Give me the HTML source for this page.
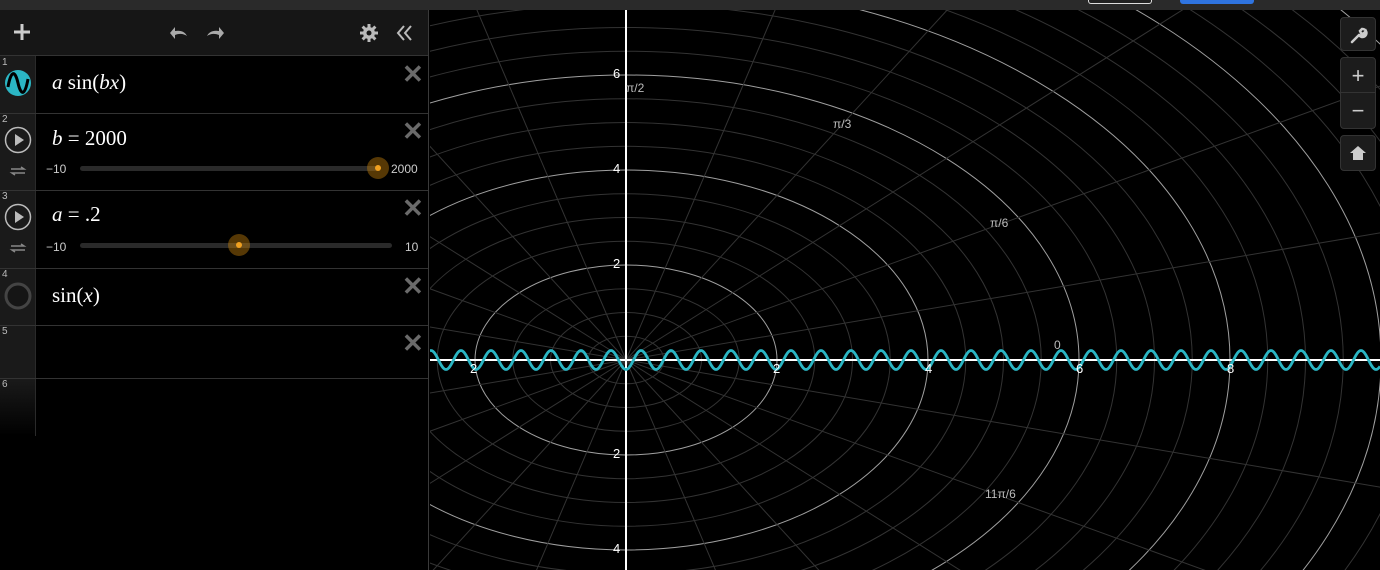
<!DOCTYPE html>
<html><head><meta charset="utf-8">
<style>
*{margin:0;padding:0;box-sizing:border-box}
html,body{width:1380px;height:570px;overflow:hidden}
body{background:#000;position:relative;font-family:"Liberation Sans",sans-serif}
.abs{position:absolute}
#top{left:0;top:0;width:1380px;height:10px;background:#2a2a2a}
#side{left:0;top:10px;width:429px;height:560px;background:#000;border-right:1px solid #3a3a3a}
#tool{left:0;top:10px;width:428px;height:46px;background:#161616;border-bottom:1px solid #333}
.gut{left:0;width:36px;background:#1a1a1a;border-right:1px solid #2a2a2a}
.row{left:0;width:428px;border-bottom:1px solid #333}
.num{font-size:10px;color:#bbb;left:2px}
.math{font-family:"Liberation Serif",serif;color:#fff;font-size:21px;left:52px}
.math i{font-style:italic}
.x{color:#6a6a6a;font-size:26px;left:402px;line-height:20px;font-weight:bold}
.lbl{color:#ccc;font-size:12px}
.track{height:5px;border-radius:3px;background:#2a2a2a}
.thumb{width:22px;height:22px;border-radius:50%;background:rgba(190,125,10,0.45)}
.thumb::after{content:"";position:absolute;left:8px;top:8px;width:6px;height:6px;border-radius:50%;background:#f0a020}
.btn{left:1340px;width:36px;background:#1c1c1c;border:1px solid #333;border-radius:4px;color:#ccc;text-align:center}
.gl{color:#fff;font-size:13px}
.tl{color:#bbb;font-size:12px}
</style></head><body>
<svg class="abs" style="left:0;top:0" width="1380" height="570" id="g"></svg>
<div class="abs" id="top"></div>
<div class="abs" style="left:1088px;top:0;width:64px;height:4px;border:1px solid #ddd;border-top:none;border-radius:0 0 3px 3px;background:#222"></div>
<div class="abs" style="left:1180px;top:0;width:74px;height:4px;background:#2f74e0;border-radius:0 0 3px 3px"></div>
<div class="abs" id="side"></div>
<div class="abs" id="tool"></div>
<svg class="abs" style="left:0;top:10px" width="428" height="46">
 <path d="M22 14v16M14 22h16" stroke="#ccc" stroke-width="3"/>
 <path d="M170 23 l5 -6 v4 c6 -1 10 1 12 5 c-3 -2 -7 -3 -12 -1 v4z" fill="#aaa"/>
 <path d="M224 23 l-5 -6 v4 c-6 -1 -10 1 -12 5 c3 -2 7 -3 12 -1 v4z" fill="#aaa"/>
 <g transform="translate(369,23)" fill="#bbb"><circle r="6"/><g stroke="#bbb" stroke-width="3"><path d="M0 -9V9M-9 0H9M-6.4 -6.4L6.4 6.4M-6.4 6.4L6.4 -6.4"/></g><circle r="2.5" fill="#161616"/></g>
 <path d="M404 16l-6 7 6 7M411 16l-6 7 6 7" stroke="#bbb" stroke-width="2" fill="none"/>
</svg>
<div class="abs gut" style="top:56px;height:380px;background:linear-gradient(#1a1a1a 85%,#000)"></div>
<div class="abs row" style="top:56px;height:58px"></div>
<div class="abs row" style="top:113px;height:78px"></div>
<div class="abs row" style="top:190px;height:79px"></div>
<div class="abs row" style="top:268px;height:58px"></div>
<div class="abs row" style="top:325px;height:54px"></div>
<div class="abs num" style="top:57px">1</div>
<div class="abs num" style="top:114px">2</div>
<div class="abs num" style="top:191px">3</div>
<div class="abs num" style="top:269px">4</div>
<div class="abs num" style="top:326px">5</div>
<div class="abs num" style="top:379px">6</div>
<svg class="abs" style="left:0;top:56px" width="36" height="330">
 <circle cx="18" cy="27" r="13" fill="#2bb6c4"/>
 <path d="M8 31 C11 14 15 14 18 27 C21 40 25 40 28 23" stroke="#000" stroke-width="3" fill="none"/>
 <circle cx="18" cy="84" r="12.5" fill="none" stroke="#bbb" stroke-width="1.5"/><path d="M15 78v12l9 -6z" fill="#bbb"/>
 <path d="M11 113h13l-3 -2M25 117h-13l3 2" stroke="#888" stroke-width="1.5" fill="none"/>
 <circle cx="18" cy="161" r="12.5" fill="none" stroke="#bbb" stroke-width="1.5"/><path d="M15 155v12l9 -6z" fill="#bbb"/>
 <path d="M11 190h13l-3 -2M25 194h-13l3 2" stroke="#888" stroke-width="1.5" fill="none"/>
 <circle cx="18" cy="240" r="12" fill="#151515" stroke="#444" stroke-width="3"/>
</svg>
<div class="abs math" style="top:70px"><i>a</i> sin(<i>bx</i>)</div>
<div class="abs math" style="top:126px"><i>b</i> = 2000</div>
<div class="abs math" style="top:202px"><i>a</i> = .2</div>
<div class="abs math" style="top:283px">sin(<i>x</i>)</div>
<div class="abs x" style="top:64px">✕</div>
<div class="abs x" style="top:121px">✕</div>
<div class="abs x" style="top:198px">✕</div>
<div class="abs x" style="top:276px">✕</div>
<div class="abs x" style="top:333px">✕</div>
<div class="abs lbl" style="left:46px;top:162px">−10</div>
<div class="abs track" style="left:80px;top:166px;width:298px"></div>
<div class="abs thumb" style="left:367px;top:157px"></div>
<div class="abs lbl" style="left:391px;top:162px">2000</div>
<div class="abs lbl" style="left:46px;top:240px">−10</div>
<div class="abs track" style="left:80px;top:243px;width:312px"></div>
<div class="abs thumb" style="left:228px;top:234px"></div>
<div class="abs lbl" style="left:405px;top:240px">10</div>
<div class="abs btn" style="top:17px;height:34px;line-height:32px;font-size:18px">
<svg width="20" height="20" viewBox="0 0 20 20" style="margin-top:7px"><path d="M4 17 L11 10 M11 10 a4 4 0 1 0 3 -6 l-2 2 1 2 2 1 2 -2 a4 4 0 0 1 -6 3" stroke="#ccc" stroke-width="2.5" fill="none" stroke-linecap="round"/></svg></div>
<div class="abs btn" style="top:57px;height:72px"><div style="height:35px;line-height:35px;font-size:22px;border-bottom:1px solid #333">+</div><div style="line-height:35px;font-size:22px">−</div></div>
<div class="abs btn" style="top:135px;height:36px"><svg width="18" height="18" viewBox="0 0 18 18" style="margin-top:8px"><path d="M1 9 L9 2 L17 9 H14 V16 H4 V9z" fill="#ccc"/></svg></div>
<div class="abs gl" style="left:613px;top:66px">6</div>
<div class="abs gl" style="left:613px;top:161px">4</div>
<div class="abs gl" style="left:613px;top:256px">2</div>
<div class="abs gl" style="left:613px;top:446px">2</div>
<div class="abs gl" style="left:613px;top:541px">4</div>
<div class="abs gl" style="left:470px;top:361px">2</div>
<div class="abs gl" style="left:773px;top:361px">2</div>
<div class="abs gl" style="left:925px;top:361px">4</div>
<div class="abs gl" style="left:1076px;top:361px">6</div>
<div class="abs gl" style="left:1227px;top:361px">8</div>
<div class="abs tl" style="left:626px;top:81px">π/2</div>
<div class="abs tl" style="left:833px;top:117px">π/3</div>
<div class="abs tl" style="left:990px;top:216px">π/6</div>
<div class="abs tl" style="left:1054px;top:338px">0</div>
<div class="abs tl" style="left:985px;top:487px">11π/6</div>
<script>
var s='',cx=626,cy=360,sx=75.5,sy=47.5;
s+='<svg x="430" y="10" width="950" height="560"><g transform="translate(-430,-10)">';
for(var r=0.5;r<=14;r+=0.5){var maj=(r%2==0);
s+='<ellipse cx="'+cx+'" cy="'+cy+'" rx="'+r*sx+'" ry="'+r*sy+'" fill="none" stroke="'+(maj?'#a0a0a0':'#333')+'" stroke-width="1"/>';}
for(var a=0;a<360;a+=15){var t=a*Math.PI/180;
s+='<line x1="'+cx+'" y1="'+cy+'" x2="'+(cx+16*sx*Math.cos(t))+'" y2="'+(cy-16*sy*Math.sin(t))+'" stroke="#333" stroke-width="1"/>';}
s+='<line x1="430" y1="'+cy+'" x2="1380" y2="'+cy+'" stroke="#fff" stroke-width="2"/>';
s+='<line x1="'+cx+'" y1="10" x2="'+cx+'" y2="570" stroke="#fff" stroke-width="2"/>';
var p='';for(var x=430;x<=1380;x+=1){p+=(x==430?'M':'L')+x+' '+(cy+9.5*Math.cos(2*Math.PI*(x-cx)/30)).toFixed(2);}
s+='<path d="'+p+'" stroke="#2bb6c4" stroke-width="2.8" fill="none"/>';
s+='</g></svg>';
document.getElementById('g').innerHTML=s;
</script>
</body></html>
